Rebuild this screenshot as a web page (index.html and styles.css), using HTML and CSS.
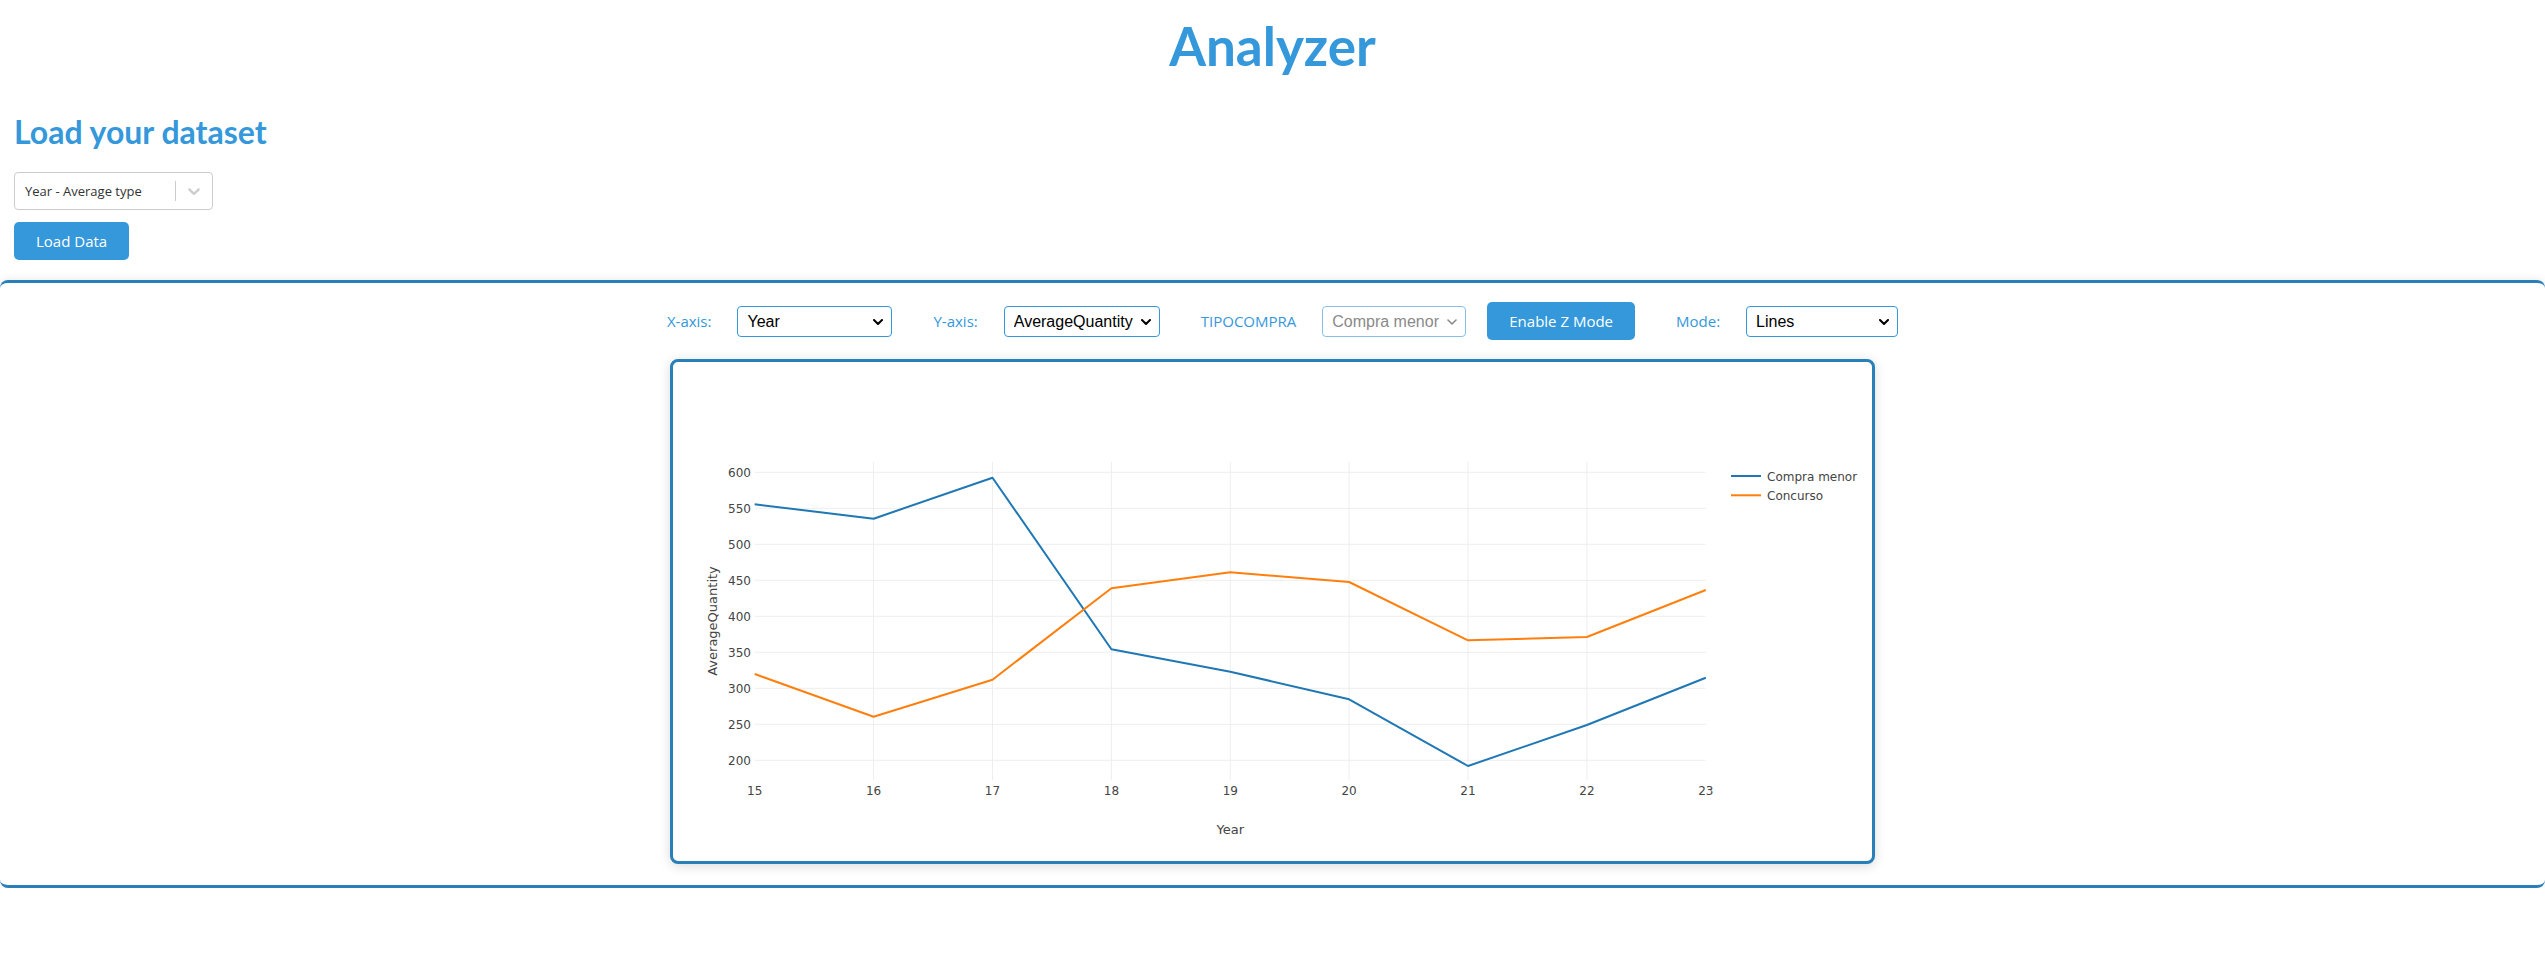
FILE: index.html
```html
<!DOCTYPE html>
<html lang="en">
<head>
<meta charset="utf-8">
<title>Analyzer</title>
<link rel="stylesheet" href="styles.css">
</head>
<body>
<header class="top">
  <h1 class="app-title">Analyzer</h1>
  <h2 class="section-title">Load your dataset</h2>
  <div class="rs">
    <div class="rs-value">Year - Average type</div>
    <span class="rs-sep"></span>
    <span class="rs-ind"><svg width="20" height="20" viewBox="0 0 20 20"><path d="M4.516 7.548c0.436-0.446 1.043-0.481 1.576 0l3.908 3.747 3.908-3.747c0.533-0.481 1.141-0.446 1.574 0 0.436 0.445 0.408 1.197 0 1.615-0.406 0.418-4.695 4.502-4.695 4.502-0.217 0.223-0.502 0.335-0.787 0.335s-0.57-0.112-0.789-0.335c0 0-4.287-4.084-4.695-4.502s-0.436-1.17 0-1.615z"/></svg></span>
  </div>
  <button class="btn btn-load">Load Data</button>
</header>

<section class="panel">
  <div class="controls">
    <label class="ctl-label">X-axis:</label>
    <span class="sel sel-x"><select><option>Year</option></select><svg class="chev" width="10" height="6" viewBox="0 0 10 6"><polyline points="1,1 5,5 9,1"/></svg></span>
    <label class="ctl-label">Y-axis:</label>
    <span class="sel sel-y"><select><option>AverageQuantity</option></select><svg class="chev" width="10" height="6" viewBox="0 0 10 6"><polyline points="1,1 5,5 9,1"/></svg></span>
    <label class="ctl-label">TIPOCOMPRA</label>
    <span class="sel sel-t sel-disabled"><select disabled><option>Compra menor</option></select><svg class="chev" width="10" height="6" viewBox="0 0 10 6"><polyline points="1,1 5,5 9,1"/></svg></span>
    <button class="btn btn-z">Enable Z Mode</button>
    <label class="ctl-label">Mode:</label>
    <span class="sel sel-m"><select><option>Lines</option></select><svg class="chev" width="10" height="6" viewBox="0 0 10 6"><polyline points="1,1 5,5 9,1"/></svg></span>
  </div>

  <div class="card">
    <svg class="chart" width="1199" height="499" viewBox="0 0 1199 499">
      <g class="grid">
        <line x1="81.7" x2="1032.8" y1="110.3" y2="110.3"/>
        <line x1="81.7" x2="1032.8" y1="146.3" y2="146.3"/>
        <line x1="81.7" x2="1032.8" y1="182.3" y2="182.3"/>
        <line x1="81.7" x2="1032.8" y1="218.3" y2="218.3"/>
        <line x1="81.7" x2="1032.8" y1="254.3" y2="254.3"/>
        <line x1="81.7" x2="1032.8" y1="290.3" y2="290.3"/>
        <line x1="81.7" x2="1032.8" y1="326.3" y2="326.3"/>
        <line x1="81.7" x2="1032.8" y1="362.3" y2="362.3"/>
        <line x1="81.7" x2="1032.8" y1="398.3" y2="398.3"/>
        <line x1="200.6" x2="200.6" y1="100" y2="418"/>
        <line x1="319.5" x2="319.5" y1="100" y2="418"/>
        <line x1="438.4" x2="438.4" y1="100" y2="418"/>
        <line x1="557.3" x2="557.3" y1="100" y2="418"/>
        <line x1="676.1" x2="676.1" y1="100" y2="418"/>
        <line x1="795" x2="795" y1="100" y2="418"/>
        <line x1="913.9" x2="913.9" y1="100" y2="418"/>
      </g>
      <g class="tick ytick">
        <text x="78" y="114.7">600</text>
        <text x="78" y="150.7">550</text>
        <text x="78" y="186.7">500</text>
        <text x="78" y="222.7">450</text>
        <text x="78" y="258.7">400</text>
        <text x="78" y="294.7">350</text>
        <text x="78" y="330.7">300</text>
        <text x="78" y="366.7">250</text>
        <text x="78" y="402.7">200</text>
      </g>
      <g class="tick xtick">
        <text x="81.7" y="433">15</text>
        <text x="200.6" y="433">16</text>
        <text x="319.5" y="433">17</text>
        <text x="438.4" y="433">18</text>
        <text x="557.3" y="433">19</text>
        <text x="676.1" y="433">20</text>
        <text x="795" y="433">21</text>
        <text x="913.9" y="433">22</text>
        <text x="1032.8" y="433">23</text>
      </g>
      <polyline class="series s-blue" points="81.7,142.3 200.6,156.7 319.5,115.7 438.4,287.3 557.3,309.7 676.1,337.3 795,404 913.9,363 1032.8,315.7"/>
      <polyline class="series s-orange" points="81.7,312 200.6,354.7 319.5,317.7 438.4,226.3 557.3,210.3 676.1,220 795,278.3 913.9,275 1032.8,228"/>
      <text class="axis-title" x="39" y="263.5" transform="rotate(-90 39 259)">AverageQuantity</text>
      <text class="axis-title" x="557.3" y="472">Year</text>
      <g class="legend">
        <line class="s-blue" x1="1058" x2="1088" y1="114" y2="114"/>
        <text x="1094" y="118.5">Compra menor</text>
        <line class="s-orange" x1="1058" x2="1088" y1="133.3" y2="133.3"/>
        <text x="1094" y="137.8">Concurso</text>
      </g>
    </svg>
  </div>
</section>
</body>
</html>
```

FILE: styles.css
```css
html, body {
  margin: 0;
  padding: 0;
  background: #ffffff;
}

body {
  font-family: "Open Sans", "Liberation Sans", sans-serif;
  color: #333;
}

.top {
  padding: 0 14px;
}

.app-title {
  margin: 14px 0 0;
  text-align: center;
  font-family: Lato, "Open Sans", sans-serif;
  font-weight: 700;
  font-size: 53px;
  line-height: 64px;
  color: #3498db;
}

.section-title {
  margin: 35px 0 0;
  font-family: Lato, "Open Sans", sans-serif;
  font-weight: 700;
  font-size: 32px;
  line-height: 38px;
  color: #3498db;
}

.rs {
  margin-top: 21px;
  width: 199px;
  height: 38px;
  box-sizing: border-box;
  display: flex;
  align-items: center;
  border: 1px solid #cccccc;
  border-radius: 4px;
  background: #fff;
}

.rs-value {
  flex: 1;
  padding-left: 10px;
  font-family: "Open Sans", sans-serif;
  font-size: 13px;
  color: #333333;
  white-space: nowrap;
}

.rs-sep {
  width: 1px;
  align-self: stretch;
  margin: 8px 0;
  background: #cccccc;
}

.rs-ind {
  display: flex;
  padding: 8px;
}

.rs-ind svg {
  fill: #cccccc;
  display: block;
}

.btn {
  height: 38px;
  padding: 0 22px;
  border: none;
  border-radius: 5px;
  background: #3498db;
  color: #ffffff;
  font-family: "Open Sans", sans-serif;
  font-size: 15px;
  cursor: pointer;
}

.btn-load {
  display: block;
  margin-top: 12px;
}

.panel {
  margin-top: 20px;
  border-top: 3px solid #2980b9;
  border-bottom: 3px solid #2980b9;
  border-radius: 8px;
  box-shadow: 0 0 10px rgba(0, 0, 0, 0.1);
  padding: 19px 0 21px;
  background: #fff;
}

.controls {
  display: flex;
  justify-content: center;
  align-items: center;
  gap: 21px;
  height: 38px;
}

.ctl-label {
  margin: 0 5px 0 20px;
  font-family: "Open Sans", sans-serif;
  font-size: 15px;
  color: #3498db;
  white-space: nowrap;
}

.sel {
  position: relative;
  display: inline-flex;
}

.sel select {
  -webkit-appearance: none;
  appearance: none;
  box-sizing: border-box;
  height: 31px;
  padding: 0 18px 0 9px;
  border: 1px solid #3498db;
  border-radius: 4px;
  background: #ffffff;
  font-family: "Liberation Sans", Arial, sans-serif;
  font-size: 16px;
  color: #000000;
  outline: none;
}

.sel-x select { width: 155px; }
.sel-y select { width: 156px; padding-right: 12px; }
.sel-t select { width: 144px; }
.sel-m select { width: 152px; }

.sel-disabled select {
  color: #8a8a8a;
  border-color: #86c0e9;
  opacity: 1;
}

.chev {
  position: absolute;
  right: 9px;
  top: 13px;
  pointer-events: none;
}

.chev polyline {
  fill: none;
  stroke: #000;
  stroke-width: 2;
  stroke-linecap: round;
  stroke-linejoin: round;
}

.sel-disabled .chev polyline {
  stroke: #8a8a8a;
  stroke-width: 1.6;
}

.card {
  width: 1205px;
  box-sizing: border-box;
  margin: 19px auto 0;
  border: 3px solid #2980b9;
  border-radius: 8px;
  box-shadow: 0 2px 12px rgba(0, 0, 0, 0.15);
  background: #fff;
}

.chart {
  display: block;
}

.grid line {
  stroke: #eeeeee;
  stroke-width: 1;
}

.tick text,
.legend text,
.axis-title {
  font-family: "DejaVu Sans", Verdana, sans-serif;
  fill: #444444;
}

.tick text {
  font-size: 12px;
}

.ytick text {
  text-anchor: end;
}

.xtick text {
  text-anchor: middle;
}

.axis-title {
  font-size: 13px;
  text-anchor: middle;
}

.legend text {
  font-size: 12px;
}

.series {
  fill: none;
  stroke-width: 2;
  stroke-linejoin: round;
}

.s-blue { stroke: #1f77b4; stroke-width: 2; }
.s-orange { stroke: #ff7f0e; stroke-width: 2; }
```
